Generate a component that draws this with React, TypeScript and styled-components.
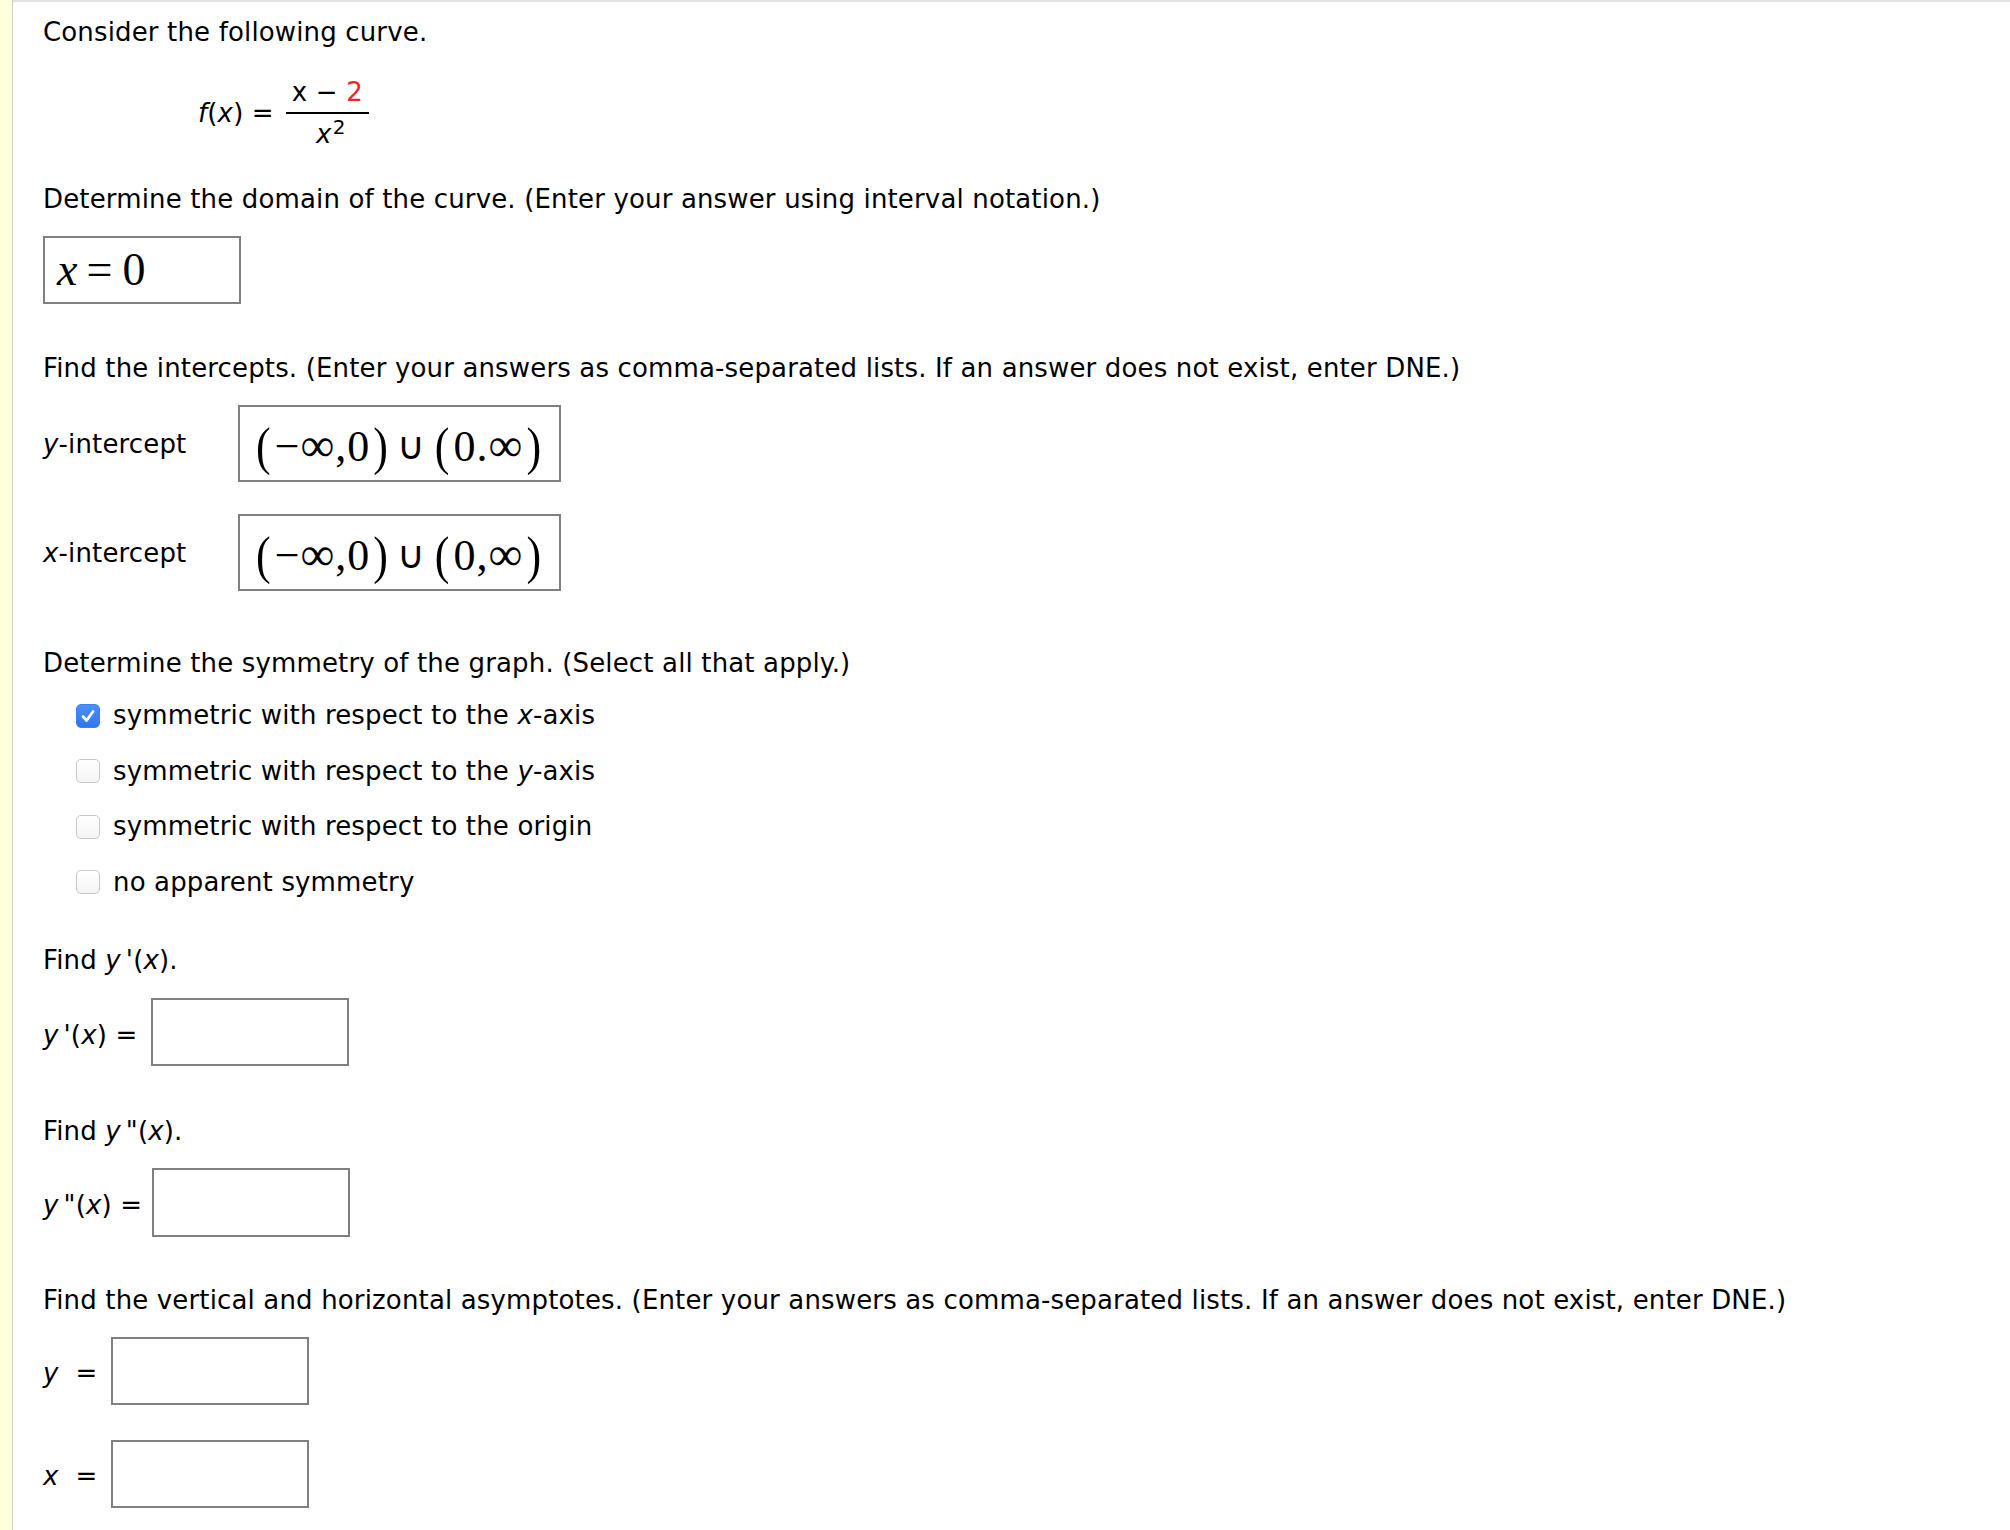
import React from "react";
import styled, { createGlobalStyle } from "styled-components";

const GlobalStyle = createGlobalStyle`
  html, body {
    margin: 0;
    padding: 0;
    background: #fff;
  }
  body {
    font-family: "DejaVu Sans", Verdana, sans-serif;
    font-size: 26px;
    line-height: 31px;
    letter-spacing: 0.15px;
    color: #000;
  }
`;

const Page = styled.div`
  display: flex;
  min-height: 1530px;
`;

const Stripe = styled.div`
  flex: none;
  width: 12px;
  background: #ffffdc;
  border-right: 1px solid #cfcfcf;
`;

const Main = styled.main`
  flex: 1;
  border-top: 2px solid #e2e2e2;
  padding: 15px 0 0 30px;
`;

const Para = styled.p<{ $mt?: number }>`
  margin: ${({ $mt = 0 }) => $mt}px 0 0;
  white-space: nowrap;
`;

const Var = styled.i`
  font-style: italic;
`;

const Prime = styled.i`
  font-style: italic;
  margin-left: 5px;
`;

const Red = styled.span`
  color: #e8291f;
`;

const FormulaRow = styled.div<{ $mt: number }>`
  display: flex;
  align-items: center;
  margin: ${({ $mt }) => $mt}px 0 0 155px;
  white-space: nowrap;
`;

const Frac = styled.div`
  display: inline-flex;
  flex-direction: column;
  align-items: center;
  margin-left: 12px;
`;

const Num = styled.span`
  padding: 0 6px 4px;
`;

const Bar = styled.span`
  align-self: stretch;
  height: 2px;
  background: #000;
`;

const Den = styled.span`
  padding: 5px 5px 0 12px;
`;

const Sup = styled.span`
  font-size: 20px;
  line-height: 0;
  vertical-align: 9px;
  margin-left: 1px;
`;

const FieldRow = styled.div<{ $mt: number }>`
  display: flex;
  align-items: center;
  margin-top: ${({ $mt }) => $mt}px;
`;

const FieldLabel = styled.span<{ $w: number; $drop?: number }>`
  flex: none;
  width: ${({ $w }) => $w}px;
  padding-top: ${({ $drop = 0 }) => $drop}px;
  white-space: nowrap;
`;

const AnswerBox = styled.div<{ $w: number; $h: number; $pl?: number; $pt?: number }>`
  box-sizing: border-box;
  flex: none;
  display: flex;
  align-items: center;
  width: ${({ $w }) => $w}px;
  height: ${({ $h }) => $h}px;
  padding: ${({ $pt = 0 }) => $pt}px 0 0 ${({ $pl = 0 }) => $pl}px;
  border: 2px solid #808080;
  background: #fff;
`;

const MathText = styled.span<{ $size: number; $spacing?: number }>`
  font-family: "Liberation Serif", "Times New Roman", serif;
  font-size: ${({ $size }) => $size}px;
  letter-spacing: ${({ $spacing = 0 }) => $spacing}px;
  line-height: 1;
  white-space: nowrap;
`;

const MathVar = styled.i`
  font-style: italic;
`;

const MathOp = styled.span`
  margin: 0 10px 0 9px;
`;

const Paren = styled.span`
  display: inline-block;
  margin: 0 3px;
  transform: scaleY(1.22);
`;

const Infinity = styled.span`
  font-size: 1.08em;
`;

const Cup = styled.span`
  font-family: "DejaVu Sans", sans-serif;
  font-size: 38px;
  letter-spacing: 0;
  margin: 0 7px 0 5px;
  vertical-align: 2px;
`;

const CheckList = styled.div<{ $mt: number }>`
  margin: ${({ $mt }) => $mt}px 0 0 33px;
`;

const CheckRow = styled.label`
  display: flex;
  align-items: center;
  gap: 13px;
  height: 55.4px;
  white-space: nowrap;
`;

const CheckBox = styled.span<{ $checked?: boolean }>`
  box-sizing: border-box;
  flex: none;
  display: flex;
  align-items: center;
  justify-content: center;
  width: 24px;
  height: 24px;
  border-radius: 5px;
  border: 1px solid ${({ $checked }) => ($checked ? "#3a7ff2" : "#c6c6c6")};
  background: ${({ $checked }) =>
    $checked ? "linear-gradient(#4c8ff8, #2f76ee)" : "linear-gradient(#ffffff, #f4f4f4)"};
`;

const Check = () => (
  <svg width="18" height="18" viewBox="0 0 18 18" fill="none">
    <path d="M4 9.5 L7.6 13.5 L14 4.5" stroke="#fff" strokeWidth="2.8" strokeLinecap="round" strokeLinejoin="round" />
  </svg>
);

const Interval = ({ sep }: { sep: string }) => (
  <MathText $size={44} $spacing={1}>
    <Paren>(</Paren>−<Infinity>∞</Infinity>,0<Paren>)</Paren>
    <Cup>∪</Cup>
    <Paren>(</Paren>0{sep}
    <Infinity>∞</Infinity>
    <Paren>)</Paren>
  </MathText>
);

const symmetryOptions: { label: React.ReactNode; checked?: boolean }[] = [
  { label: <>symmetric with respect to the <Var>x</Var>-axis</>, checked: true },
  { label: <>symmetric with respect to the <Var>y</Var>-axis</> },
  { label: <>symmetric with respect to the origin</> },
  { label: <>no apparent symmetry</> },
];

export default function App() {
  return (
    <>
      <GlobalStyle />
      <Page>
        <Stripe />
        <Main>
          <Para>Consider the following curve.</Para>

          <FormulaRow $mt={29}>
            <span>
              <Var>f</Var>(<Var>x</Var>) =
            </span>
            <Frac>
              <Num>
                x − <Red>2</Red>
              </Num>
              <Bar />
              <Den>
                <Var>x</Var>
                <Sup>2</Sup>
              </Den>
            </Frac>
          </FormulaRow>

          <Para $mt={34}>Determine the domain of the curve. (Enter your answer using interval notation.)</Para>
          <FieldRow $mt={20.5}>
            <AnswerBox $w={198} $h={68} $pl={12}>
              <MathText $size={46}>
                <MathVar>x</MathVar>
                <MathOp>=</MathOp>0
              </MathText>
            </AnswerBox>
          </FieldRow>

          <Para $mt={49.5}>
            Find the intercepts. (Enter your answers as comma-separated lists. If an answer does not exist, enter DNE.)
          </Para>
          <FieldRow $mt={20.5}>
            <FieldLabel $w={195} $drop={3}>
              <Var>y</Var>-intercept
            </FieldLabel>
            <AnswerBox $w={323} $h={77} $pl={13} $pt={6}>
              <Interval sep="." />
            </AnswerBox>
          </FieldRow>
          <FieldRow $mt={32}>
            <FieldLabel $w={195} $drop={3}>
              <Var>x</Var>-intercept
            </FieldLabel>
            <AnswerBox $w={323} $h={77} $pl={13} $pt={6}>
              <Interval sep="," />
            </AnswerBox>
          </FieldRow>

          <Para $mt={57.5}>Determine the symmetry of the graph. (Select all that apply.)</Para>
          <CheckList $mt={9.3}>
            {symmetryOptions.map((opt, i) => (
              <CheckRow key={i}>
                <CheckBox $checked={opt.checked}>{opt.checked && <Check />}</CheckBox>
                <span>{opt.label}</span>
              </CheckRow>
            ))}
          </CheckList>

          <Para $mt={35}>
            Find <Var>y</Var>
            <Prime>'</Prime>(<Var>x</Var>).
          </Para>
          <FieldRow $mt={22.5}>
            <FieldLabel $w={108} $drop={6}>
              <Var>y</Var>
              <Prime>'</Prime>(<Var>x</Var>) =
            </FieldLabel>
            <AnswerBox $w={198} $h={68} />
          </FieldRow>

          <Para $mt={49.5}>
            Find <Var>y</Var>
            <Prime>"</Prime>(<Var>x</Var>).
          </Para>
          <FieldRow $mt={21.5}>
            <FieldLabel $w={109} $drop={6}>
              <Var>y</Var>
              <Prime>"</Prime>(<Var>x</Var>) =
            </FieldLabel>
            <AnswerBox $w={198} $h={69} />
          </FieldRow>

          <Para $mt={47.5}>
            Find the vertical and horizontal asymptotes. (Enter your answers as comma-separated lists. If an answer
            does not exist, enter DNE.)
          </Para>
          <FieldRow $mt={21.5}>
            <FieldLabel $w={68} $drop={4}>
              <Var>y</Var>&nbsp; =
            </FieldLabel>
            <AnswerBox $w={198} $h={68} />
          </FieldRow>
          <FieldRow $mt={35}>
            <FieldLabel $w={68} $drop={4}>
              <Var>x</Var>&nbsp; =
            </FieldLabel>
            <AnswerBox $w={198} $h={68} />
          </FieldRow>
        </Main>
      </Page>
    </>
  );
}
